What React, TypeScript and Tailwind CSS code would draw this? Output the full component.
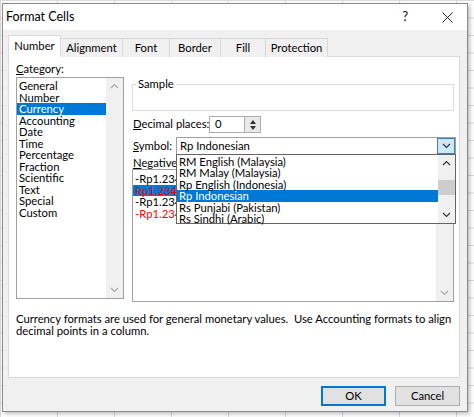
const categories = [
  'General',
  'Number',
  'Currency',
  'Accounting',
  'Date',
  'Time',
  'Percentage',
  'Fraction',
  'Scientific',
  'Text',
  'Special',
  'Custom',
];

const symbols = [
  'RM English (Malaysia)',
  'RM Malay (Malaysia)',
  'Rp English (Indonesia)',
  'Rp Indonesian',
  'Rs Punjabi (Pakistan)',
  'Rs Sindhi (Arabic)',
];

const negatives = [
  { text: '-Rp1.234', red: false, selected: false },
  { text: 'Rp1.234', red: true, selected: true },
  { text: '-Rp1.234', red: false, selected: false },
  { text: '-Rp1.234', red: true, selected: false },
];

const tabs = [
  { label: 'Number', className: 'w-[53px]' },
  { label: 'Alignment', className: 'w-[62px]' },
  { label: 'Font', className: 'w-[47px]' },
  { label: 'Border', className: 'w-[51px]' },
  { label: 'Fill', className: 'w-[45px]' },
  { label: 'Protection', className: 'w-[62px]' },
];

const Chevron = ({ up = false, color = '#606060' }: { up?: boolean; color?: string }) => (
  <svg width="9" height="6" viewBox="0 0 9 6" fill="none">
    <path d={up ? 'M1 5L4.5 1.5L8 5' : 'M1 1L4.5 4.5L8 1'} stroke={color} strokeWidth="1.2" />
  </svg>
);

const ScrollTrack = () => (
  <div className="flex h-full w-[17px] shrink-0 flex-col items-center justify-between bg-[#f0f0f0] py-[5px]">
    <Chevron up color="#a8a8a8" />
    <Chevron color="#a8a8a8" />
  </div>
);

export default function App() {
  return (
    <div className="h-[417px] w-[474px] overflow-hidden bg-white bg-[linear-gradient(to_bottom,#d9d9d9_1px,transparent_1px),linear-gradient(to_right,#d9d9d9_1px,transparent_1px)] bg-[size:57px_17.5px] pl-[2px] pt-[3px] font-['Segoe_UI','Lato',sans-serif] text-[11.25px] text-black">
      <div className="flex h-[409px] w-[466px] flex-col border border-[#8a8a8a] bg-[#f0f0f0] shadow-[2px_2px_4px_rgba(0,0,0,0.25)]">
        {/* title bar */}
        <div className="flex h-[26px] items-center bg-white pl-[3px]">
          <span className="text-[12.5px]">Format Cells</span>
          <span className="ml-auto mr-[34px] text-[12.5px]">?</span>
          <svg className="mr-[14px]" width="11" height="11" viewBox="0 0 11 11">
            <path d="M0.5 0.5L10.5 10.5M10.5 0.5L0.5 10.5" stroke="#222" strokeWidth="1" />
          </svg>
        </div>

        {/* tabs */}
        <div className="relative z-10 -mb-px mt-[5px] flex h-[22px] items-end pl-[5px]">
          {tabs.map((t, i) =>
            i === 0 ? (
              <div
                key={t.label}
                className={`${t.className} flex h-[22px] items-center justify-center border border-b-0 border-[#d9d9d9] bg-white`}
              >
                {t.label}
              </div>
            ) : (
              <div
                key={t.label}
                className={`${t.className} flex h-[19px] items-center justify-center border border-b-0 border-l-0 border-[#d9d9d9] bg-[#f0f0f0]`}
              >
                {t.label}
              </div>
            ),
          )}
        </div>

        {/* panel */}
        <div className="ml-[5px] h-[322px] w-[452px] border border-[#d9d9d9] bg-white">
          <div className="flex items-start">
            {/* category */}
            <div className="pl-[7px] pt-[5px]">
              <div className="leading-[14px]">
                <u>C</u>ategory:
              </div>
              <div className="mt-px flex h-[222px] w-[108px] border border-[#a0a0a0]">
                <div className="flex-1 pt-[2px]">
                  {categories.map((c) => (
                    <div
                      key={c}
                      className={
                        c === 'Currency'
                          ? 'bg-[#0078d7] pl-[2px] leading-[11.55px] text-white'
                          : 'pl-[2px] leading-[11.55px]'
                      }
                    >
                      {c}
                    </div>
                  ))}
                </div>
                <ScrollTrack />
              </div>
            </div>

            {/* right side */}
            <div className="ml-[8px] w-[324px] pt-[20px]">
              <fieldset className="h-[34px] w-[322px] border border-[#dcdcdc]">
                <legend className="ml-[3px] px-[2px] leading-[14px]">Sample</legend>
              </fieldset>

              <div className="mt-[5px] flex h-[17px] items-center whitespace-nowrap pl-px">
                <span className="w-[76px] shrink-0">
                  <u>D</u>ecimal places:
                </span>
                <div className="flex h-[17px] w-[36px] items-center border border-[#adadad] pl-[5px]">0</div>
                <div className="flex h-[17px] w-[16px] flex-col items-center justify-center gap-[2px] border border-l-0 border-[#adadad] bg-[#e9e9e9]">
                  <svg width="6" height="4" viewBox="0 0 6 4">
                    <path d="M0 4L3 0L6 4Z" fill="#333" />
                  </svg>
                  <svg width="6" height="4" viewBox="0 0 6 4">
                    <path d="M0 0L3 4L6 0Z" fill="#333" />
                  </svg>
                </div>
              </div>

              <div className="mt-[4px] flex h-[18px] items-center whitespace-nowrap pl-px">
                <span className="w-[43px] shrink-0">
                  <u>S</u>ymbol:
                </span>
                <div className="relative flex h-[18px] w-[280px] items-center border border-[#a0a0a0] pl-[3px]">
                  <span>Rp Indonesian</span>
                  <div className="ml-auto flex h-[16px] w-[18px] items-center justify-center border border-[#3c7fb1] bg-[#cce8ff]">
                    <Chevron color="#333" />
                  </div>

                  {/* open dropdown */}
                  <div className="absolute -left-px top-full z-20 flex h-[70px] w-[280px] border border-[#646464] bg-white">
                    <div className="flex-1 pt-[1px]">
                      {symbols.map((s) => (
                        <div
                          key={s}
                          className={
                            s === 'Rp Indonesian'
                              ? 'bg-[#0078d7] pl-[2px] leading-[11.4px] text-white'
                              : 'pl-[2px] leading-[11.4px]'
                          }
                        >
                          {s}
                        </div>
                      ))}
                    </div>
                    <div className="flex h-full w-[17px] flex-col items-center bg-[#f0f0f0] pt-[5px]">
                      <Chevron up color="#333" />
                      <div className="mt-[14px] h-[15px] w-[17px] bg-[#cdcdcd]" />
                      <div className="mb-[5px] mt-auto">
                        <Chevron color="#333" />
                      </div>
                    </div>
                  </div>
                </div>
              </div>

              <div className="mt-[2px] whitespace-nowrap pl-px leading-[12px]">
                <u>N</u>egative numbers:
              </div>
              <div className="flex h-[133px] w-[322px] border border-[#a0a0a0]">
                <div className="flex-1 pt-[3px]">
                  {negatives.map((n, i) => (
                    <div
                      key={i}
                      className={`${n.selected ? 'bg-[#0078d7]' : ''} ${n.red ? 'text-[#ff0000]' : ''} pl-[2px] leading-[11.6px]`}
                    >
                      {n.text}
                    </div>
                  ))}
                </div>
                <ScrollTrack />
              </div>
            </div>
          </div>

          <p className="mt-[11px] pl-[7px] leading-[12px]">
            Currency formats are used for general monetary values.&nbsp; Use Accounting formats to align
            <br />
            decimal points in a column.
          </p>
        </div>

        {/* buttons */}
        <div className="mt-[8px] flex justify-end gap-[9px] pr-[7px]">
          <button className="h-[20px] w-[65px] border-2 border-[#0078d7] bg-[#e1e1e1]">OK</button>
          <button className="h-[20px] w-[65px] border border-[#adadad] bg-[#e1e1e1]">Cancel</button>
        </div>
      </div>
    </div>
  );
}
